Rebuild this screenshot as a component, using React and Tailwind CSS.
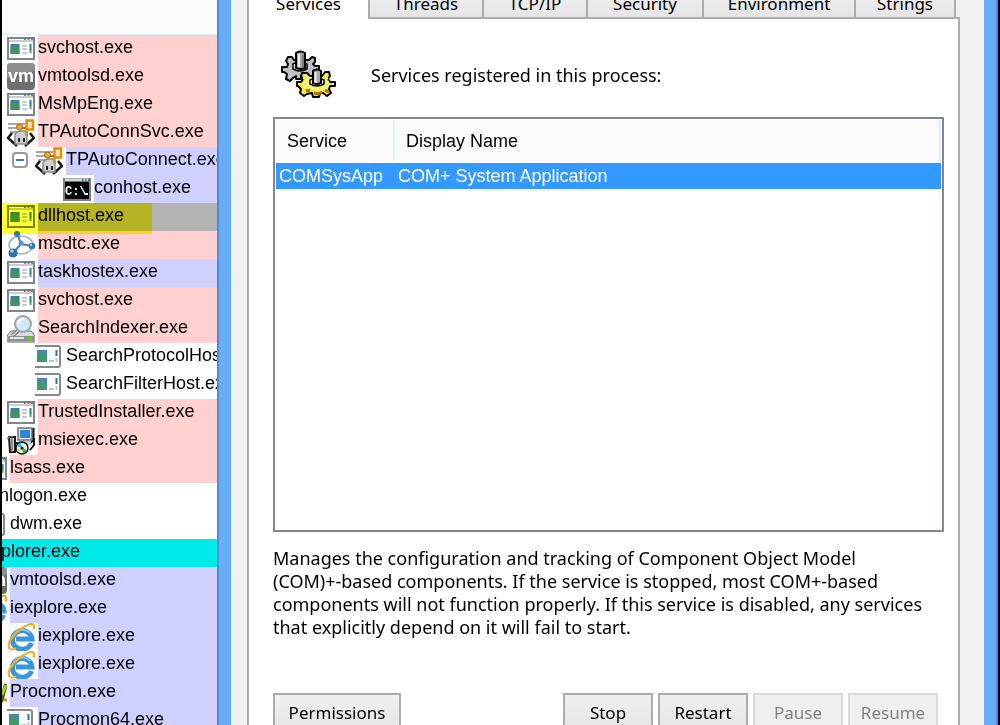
import { useState } from 'react';

const INDENT = {
  '-2': '-ml-[51px]',
  '-1': '-ml-[23px]',
  0: 'ml-[5px]',
  1: 'ml-[33px]',
  2: 'ml-[61px]',
};

const COLORS = {
  service: 'bg-[#ffd0d0]',
  own: 'bg-[#d0d0ff]',
  selected: 'bg-[#b3b3b3]',
  packed: 'bg-[#00eaea]',
  none: 'bg-white',
};

const PROCESSES = [
  { name: 'svchost.exe', icon: 'app', level: 0, color: 'service' },
  { name: 'vmtoolsd.exe', icon: 'vm', level: 0, color: 'service' },
  { name: 'MsMpEng.exe', icon: 'app', level: 0, color: 'service' },
  { name: 'TPAutoConnSvc.exe', icon: 'tp', level: 0, color: 'service' },
  { name: 'TPAutoConnect.exe', icon: 'tp', level: 1, color: 'own', expander: true },
  { name: 'conhost.exe', icon: 'console', level: 2, color: 'own' },
  { name: 'dllhost.exe', icon: 'app', level: 0, color: 'selected', marked: true },
  { name: 'msdtc.exe', icon: 'msdtc', level: 0, color: 'service' },
  { name: 'taskhostex.exe', icon: 'app', level: 0, color: 'own' },
  { name: 'svchost.exe', icon: 'app', level: 0, color: 'service' },
  { name: 'SearchIndexer.exe', icon: 'search', level: 0, color: 'service' },
  { name: 'SearchProtocolHost.exe', icon: 'plain', level: 1, color: 'none' },
  { name: 'SearchFilterHost.exe', icon: 'plain', level: 1, color: 'none' },
  { name: 'TrustedInstaller.exe', icon: 'app', level: 0, color: 'service' },
  { name: 'msiexec.exe', icon: 'msi', level: 0, color: 'service' },
  { name: 'lsass.exe', icon: 'app', level: -1, color: 'service' },
  { name: 'winlogon.exe', icon: 'plain', level: -2, color: 'none' },
  { name: 'dwm.exe', icon: 'plain', level: -1, color: 'none' },
  { name: 'explorer.exe', icon: 'plain', level: -2, color: 'packed' },
  { name: 'vmtoolsd.exe', icon: 'vm', level: -1, color: 'own' },
  { name: 'iexplore.exe', icon: 'ie', level: -1, color: 'own' },
  { name: 'iexplore.exe', icon: 'ie', level: 0, color: 'own' },
  { name: 'iexplore.exe', icon: 'ie', level: 0, color: 'own' },
  { name: 'Procmon.exe', icon: 'procmon', level: -1, color: 'own' },
  { name: 'Procmon64.exe', icon: 'plain', level: 0, color: 'own' },
];

const TABS = [
  { name: 'Services', width: 'w-[123px]' },
  { name: 'Threads', width: 'w-[114px]' },
  { name: 'TCP/IP', width: 'w-[104px]' },
  { name: 'Security', width: 'w-[116px]' },
  { name: 'Environment', width: 'w-[152px]' },
  { name: 'Strings', width: 'w-[100px]' },
];

function AppIcon() {
  return (
    <>
      <rect x="1" y="3" width="26" height="21" fill="#fff" stroke="#808688" strokeWidth="2" />
      <path d="M2 6h24" stroke="#b9bec0" strokeWidth="1.5" />
      <path d="M17 4h2M20.500 4h2M24 4h2" stroke="#4d6a78" strokeWidth="1.5" />
      <rect x="3.500" y="9" width="9" height="10" fill="#3f7fa0" />
      <path d="M3.500 19v-6l5-3 4 5v4z" fill="#3c9560" />
      <path d="M15 11h5M15 14h5M15 18h5" stroke="#b8bcbe" strokeWidth="1.5" />
      <path d="M23.500 9v6" stroke="#2b7d92" strokeWidth="2" />
      <path d="M23.500 15v3" stroke="#4da56a" strokeWidth="2" />
    </>
  );
}

function PlainIcon() {
  return (
    <>
      <path d="M0 3h23q2 0 2 2v17q0 2-2 2H0" fill="#fff" stroke="#85898b" strokeWidth="2" />
      <rect x="2" y="7" width="10" height="12" fill="#4d86ac" />
      <path d="M2 19v-8l5-2 5 6v4z" fill="#429a6c" />
      <path d="M14 18h5" stroke="#bfc3c5" strokeWidth="2" />
      <path d="M21.500 7v6" stroke="#2d7894" strokeWidth="2" />
      <path d="M21.500 15v4" stroke="#c4c8ca" strokeWidth="2" />
    </>
  );
}

function VmIcon() {
  return (
    <>
      <rect x="0" y="0" width="28" height="27" rx="4" fill="#6f6f6f" />
      <path d="M0 15V4q0-4 4-4h20q4 0 4 4v4Q16 10 0 15z" fill="#8e8e8e" />
      <text x="14" y="19" textAnchor="middle" fontSize="18" fontWeight="700" fill="#fff" fontFamily="Liberation Sans, sans-serif">vm</text>
    </>
  );
}

function TpIcon() {
  return (
    <>
      <path d="M1 5h17M1 9h9M3 13h8" stroke="#8b8b8b" strokeWidth="1.500" />
      <path d="M5 14L1 19l9 8M23 14l4 5-9 8" fill="none" stroke="#161616" strokeWidth="2.500" />
      <path d="M8 25V15l4-3h6l2 3v10z" fill="#cfcfcf" stroke="#8a8a8a" strokeWidth="1.500" />
      <path d="M12 19v4M17 19v4" stroke="#222" strokeWidth="2" />
      <circle cx="12.500" cy="8" r="3" fill="#f7a51c" stroke="#b06d0b" />
      <path d="M19.500 17V1.500H26v9h-6" fill="#ffe2ad" stroke="#e28e11" strokeWidth="2.500" />
      <path d="M15 9h4" stroke="#b06d0b" strokeWidth="2" />
    </>
  );
}

function ConsoleIcon() {
  return (
    <>
      <rect x="1" y="4" width="26" height="21" fill="#050505" stroke="#7c8082" strokeWidth="2" />
      <path d="M2 5h24" stroke="#d5dcde" strokeWidth="3" />
      <path d="M19 5h1.500M22 5h1.500M25 5h1.500" stroke="#426b7d" strokeWidth="2" />
      <text x="2" y="20" fontSize="12" fontWeight="700" fill="#fff" fontFamily="Liberation Mono, monospace">C:\</text>
      <path d="M22 19h3" stroke="#fff" strokeWidth="2" />
    </>
  );
}

function MsdtcIcon() {
  return (
    <>
      <ellipse cx="14" cy="14" rx="12" ry="9" fill="none" stroke="#a9adb0" strokeWidth="1.500" />
      <path d="M10 2l4 11 11 2M14 13L6 22" fill="none" stroke="#4d82ab" strokeWidth="2" />
      <circle cx="10" cy="3" r="3" fill="#3d7fb5" />
      <circle cx="14" cy="12" r="2.500" fill="#5d96c2" />
      <circle cx="25" cy="15" r="3.200" fill="#2f74ae" />
      <circle cx="6" cy="22" r="4.500" fill="#2e70a8" />
      <circle cx="5" cy="20" r="1.800" fill="#9ecbe8" />
      <circle cx="24" cy="14" r="1.200" fill="#a5d0ea" />
    </>
  );
}

function SearchIcon() {
  return (
    <>
      <path d="M4 16h20l4 5v5q0 1-1 1H1q-1 0-1-1v-5z" fill="#d9dbdc" stroke="#686d70" />
      <path d="M1 21h26v5H1z" fill="#8b9092" />
      <path d="M3 23h14" stroke="#e2e4e5" strokeWidth="2" />
      <rect x="20" y="21" width="5" height="5" fill="#78b82c" />
      <path d="M13 14L5 21" stroke="#777c80" strokeWidth="4" />
      <path d="M13 14L5 21" stroke="#d9dcde" strokeWidth="1.500" />
      <circle cx="16" cy="9" r="8" fill="#cfe8f7" stroke="#9da3a7" strokeWidth="2" />
      <path d="M11 9q1-5 6-5" fill="none" stroke="#fff" strokeWidth="2" />
    </>
  );
}

function MsiIcon() {
  return (
    <>
      <path d="M2 10h6v15H3z" fill="#d7d7d7" stroke="#1a1a1a" strokeWidth="2" />
      <path d="M0 12l3-3M5 9v16" stroke="#777" strokeWidth="1.500" />
      <rect x="11" y="1" width="14" height="12" fill="#dfe6ea" stroke="#6a7177" strokeWidth="1.500" />
      <rect x="13" y="3" width="10" height="8" fill="#2f86d8" />
      <path d="M26.500 1v13M9 16h14l4-3v5l-4 5" fill="none" stroke="#141414" strokeWidth="2" />
      <path d="M11 14h13v4H11z" fill="#c4cacd" />
      <circle cx="15" cy="21" r="6" fill="#e9f6ee" stroke="#111" strokeWidth="1.500" />
      <path d="M15 21l-5-2q1-3 4-3.500z" fill="#19c7c9" />
      <path d="M15 21l5 2q-1 3-4 3.500z" fill="#36b34a" />
      <path d="M15 21l-3 4.500q-2-1-2.500-3z" fill="#e8de35" />
      <circle cx="15" cy="21" r="1.500" fill="#111" />
    </>
  );
}

function IeIcon() {
  return (
    <>
      <path d="M24.500 20A9.800 9.300 0 1 1 25 16H9" fill="none" stroke="#3796dc" strokeWidth="5" />
      <path d="M6 14a9.800 9.300 0 0 1 17-4" fill="none" stroke="#8dcdf5" strokeWidth="1.500" />
      <path d="M3 26C-1 22 5 12 13 6.500 19 2 26-1 27 2.500q.5 1.500-.5 4" fill="none" stroke="#f2b01e" strokeWidth="2.200" />
      <path d="M3 26q2 1.500 6-1" fill="none" stroke="#f2b01e" strokeWidth="2" />
    </>
  );
}

function ProcmonIcon() {
  return (
    <>
      <path d="M14 5l6 17M27 5l-5 18" stroke="#2c5f13" strokeWidth="4" />
      <path d="M27 6l-4 10" stroke="#9ad02d" strokeWidth="3" />
      <path d="M25 21h3" stroke="#e08d24" strokeWidth="3" />
    </>
  );
}

const ICONS = {
  app: AppIcon,
  plain: PlainIcon,
  vm: VmIcon,
  tp: TpIcon,
  console: ConsoleIcon,
  msdtc: MsdtcIcon,
  search: SearchIcon,
  msi: MsiIcon,
  ie: IeIcon,
  procmon: ProcmonIcon,
};

function ProcessRow({ process }) {
  const Icon = ICONS[process.icon];

  return (
    <li className="relative flex h-7 items-stretch">
      {process.expander && (
        <button
          type="button"
          aria-label="Collapse"
          className="absolute left-[10px] top-[5px] flex h-4 w-4 items-center justify-center rounded-sm border-2 border-[#989898] bg-white"
        >
          <span className="h-0.5 w-2 bg-[#4377b4]" />
        </button>
      )}
      <svg viewBox="0 0 28 28" className={`h-7 w-7 shrink-0 ${INDENT[process.level]}`} aria-hidden="true">
        <Icon />
      </svg>
      <span className={`ml-[3px] min-w-0 flex-1 overflow-hidden whitespace-nowrap text-[18px] leading-6 ${COLORS[process.color]}`}>
        {process.name}
      </span>
      {process.marked && (
        <span className="pointer-events-none absolute left-0 top-0 z-10 h-[31px] w-[150px] bg-[#ffff33] mix-blend-multiply" />
      )}
    </li>
  );
}

// Two interlocking cogs, the grey one behind the yellow one
function CogsIcon() {
  return (
    <svg viewBox="0 0 56 50" className="h-[50px] w-14 shrink-0" aria-hidden="true">
      <g stroke="#000" strokeWidth="2" strokeLinejoin="round">
        <path
          d="M7 7h4l2 3h3l2-3h5l2 3h3l3-3 3 1v4l-2 2 2 2h4v4h-5l-1 3 3 3-3 3h-4l-3-3h-5v3h-5v-3l-3 2-3 3-4-2 1-5-3-2H1v-5h5l1-3-2-3z"
          fill="#c0c0c4"
        />
        <path d="M12 14q7-4 14 0v5q-7 4-14 0z" fill="#fff" strokeWidth="1.500" />
        <path d="M15 3q4-3 9 0v15q-4 2-9 0z" fill="#a8a8a8" />
      </g>
      <path d="M18 4v13" stroke="#eee" strokeWidth="2" />
      <path d="M22 5v12" stroke="#6b6b6b" strokeWidth="1.500" />
      <g stroke="#000" strokeWidth="2" strokeLinejoin="round">
        <path
          d="M21 23h5l3 3h12l3-4h4l1 4-2 3 2 3h5v4h-5l-1 3 2 4-4 3-4-3h-3l-1 4h-6l-1-4-5 1-3 2-4-3 1-4-3-3h-1v-4h4l2-3-2-3z"
          fill="#f6ee2c"
        />
      </g>
      <path
        d="M22 29l4-4M21 35l8-8M23 38l9-9M27 39l11-11M31 40l12-12M35 40l12-12M39 40l9-9M43 40l5-5"
        stroke="#fffde0"
        strokeWidth="1.300"
      />
      <path d="M25 41l4-1M33 43l4 1 4-2M44 40l4 2" stroke="#b86c09" strokeWidth="3" />
      <path d="M29 30q7-4 14 0v4q-7 4-14 0z" fill="#fff" stroke="#000" strokeWidth="1.500" />
      <path d="M32 21q4-3 8 0v12q-4 2-8 0z" fill="#a8a8a8" stroke="#000" strokeWidth="2" />
      <path d="M34.500 22v11" stroke="#eee" strokeWidth="2" />
    </svg>
  );
}

function DialogButton({ children, width = 'w-[90px]', disabled = false }) {
  const look = disabled
    ? 'border-[#d9d9d9] bg-[#efefef] text-[#838383]'
    : 'border-[#acacac] bg-linear-to-b from-[#f0f0f0] to-[#e5e5e5] text-black';

  return (
    <button type="button" disabled={disabled} className={`h-10 border-2 text-center ${width} ${look}`}>
      {children}
    </button>
  );
}

export default function App() {
  const [tab, setTab] = useState('Services');

  return (
    <div className="flex h-screen overflow-hidden bg-black font-['Liberation_Sans',Arial,sans-serif] text-black">
      <aside className="w-[217px] shrink-0 overflow-hidden border-l-2 border-black bg-white">
        <div className="h-[35px] border-b border-[#dcebfa] bg-[#fafafa]" />
        <ul>
          {PROCESSES.map((p, i) => (
            <ProcessRow key={i} process={p} />
          ))}
        </ul>
      </aside>

      <main className="mr-0.5 flex min-w-0 flex-1 border-x-2 border-[#4a8fdb] bg-[#6aadf5] px-3">
        <div className="flex min-w-0 flex-1 flex-col bg-[#f0f0f0] pl-4 pr-6 font-['Noto_Sans',Tahoma,sans-serif] text-[17px]">
          <div role="tablist" className="z-10 flex h-[19px] shrink-0 items-end">
            {TABS.map((t) => (
              <button
                key={t.name}
                type="button"
                role="tab"
                aria-selected={tab === t.name}
                onClick={() => setTab(t.name)}
                className={`h-7 shrink-0 border-r-2 border-[#acacac] ${t.width} ${
                  tab === t.name
                    ? 'border-l-2 bg-white pb-2'
                    : 'border-b-2 bg-linear-to-b from-[#f0f0f0] to-[#e5e5e5]'
                }`}
              >
                {t.name}
              </button>
            ))}
            <span className="h-0.5 flex-1 bg-[#acacac]" />
          </div>

          <section className="flex-1 border-x-2 border-[#acacac] bg-white pl-6 pr-[14px]">
            <div className="flex items-center gap-[34px] pl-2 pt-[31px]">
              <CogsIcon />
              <h1 className="text-[18px]">Services registered in this process:</h1>
            </div>

            <div className="mt-[17px] h-[415px] border-2 border-[#828790] bg-white p-px">
              <table className="w-full table-fixed border-separate border-spacing-0 text-left font-['Liberation_Sans',Arial,sans-serif] text-[18px]">
                <thead>
                  <tr className="h-[43px] bg-[#fafafa]">
                    <th className="w-[119px] border-b-2 border-r-2 border-b-white border-r-[#e3eefa] pl-[11px] pt-0.5 font-normal">
                      Service
                    </th>
                    <th className="border-b-2 border-r-2 border-b-white border-r-[#e3eefa] pl-[11px] pt-0.5 font-normal">
                      Display Name
                    </th>
                  </tr>
                </thead>
                <tbody>
                  <tr className="h-[26px] bg-[#3399ff] text-white">
                    <td className="whitespace-nowrap pl-[3px] leading-[26px]">COMSysApp</td>
                    <td className="whitespace-nowrap pl-[3px] leading-[26px]">COM+ System Application</td>
                  </tr>
                </tbody>
              </table>
            </div>

            <p className="mt-[15px] h-[146px] text-[18px] leading-[23px]">
              Manages the configuration and tracking of Component Object Model
              <br />
              (COM)+-based components. If the service is stopped, most COM+-based
              <br />
              components will not function properly. If this service is disabled, any services
              <br />
              that explicitly depend on it will fail to start.
            </p>

            <div className="flex gap-[5px] pr-1.5">
              <DialogButton width="w-32">Permissions</DialogButton>
              <span className="flex-1" />
              <DialogButton>Stop</DialogButton>
              <DialogButton>Restart</DialogButton>
              <DialogButton disabled>Pause</DialogButton>
              <DialogButton disabled>Resume</DialogButton>
            </div>
          </section>
        </div>
      </main>
    </div>
  );
}
